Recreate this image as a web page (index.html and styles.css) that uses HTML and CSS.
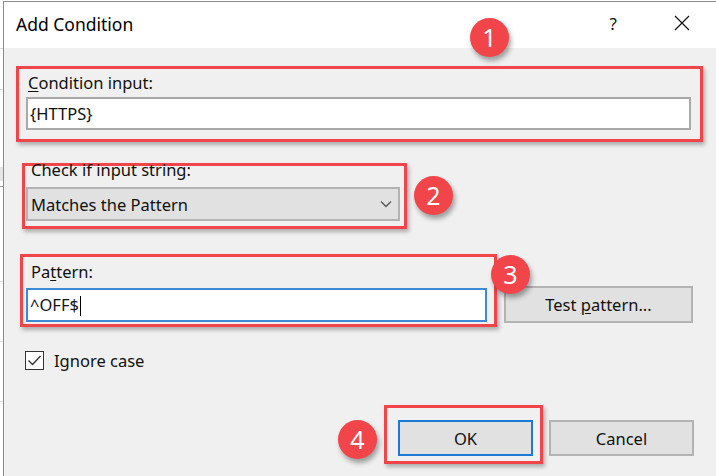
FILE: index.html
```html
<!DOCTYPE html>
<html>
<head>
<meta charset="utf-8">
<link rel="stylesheet" href="styles.css">
</head>
<body>
<div class="screen">
  <div class="sliver"></div>
  <div class="window">
    <div class="titlebar">
      <span class="title">Add Condition</span>
      <span class="help">?</span>
      <svg class="close" width="16" height="16" viewBox="0 0 16 16"><path d="M1 1 L15 15 M15 1 L1 15" stroke="#111" stroke-width="1.2" fill="none"/></svg>
    </div>
    <div class="content">
      <div class="mark box1">
        <div class="label"><u>C</u>ondition input:</div>
        <div class="field">{HTTPS}</div>
      </div>
      <div class="mark box2">
        <div class="label tight">Check if input string:</div>
        <div class="select"><span>Matches the Pattern</span>
          <svg width="12" height="8" viewBox="0 0 12 8"><path d="M1 1.5 L6 6.5 L11 1.5" stroke="#555" stroke-width="1.3" fill="none"/></svg>
        </div>
      </div>
      <div class="row3">
        <div class="mark box3">
          <div class="label">Pa<u>t</u>tern:</div>
          <div class="field focus">^OFF$<span class="caret"></span></div>
        </div>
        <div class="btn testbtn"><span>Test <u>p</u>attern...</span></div>
      </div>
      <div class="checkrow">
        <span class="checkbox"><svg width="17" height="17" viewBox="0 0 17 17"><path d="M2.5 8.5 L6.5 12.5 L14.5 4" stroke="#333" stroke-width="1.4" fill="none"/></svg></span>
        <span class="checklabel">Ignore case</span>
      </div>
      <div class="buttons">
        <div class="mark box4">
          <div class="btn ok"><span>OK</span></div>
        </div>
        <div class="btn cancel"><span>Cancel</span></div>
      </div>
    </div>
  </div>
</div>
<div class="badge b1">1</div>
<div class="badge b2">2</div>
<div class="badge b3">3</div>
<div class="badge b4">4</div>
</body>
</html>
```
FILE: styles.css
```css
html, body {
  margin: 0;
  padding: 0;
  background: #ffffff;
  width: 716px;
  height: 476px;
  overflow: hidden;
  font-family: "Noto Sans", "Open Sans", sans-serif;
  font-size: 16.5px;
  color: #111;
}
.screen {
  display: flex;
  height: 476px;
  padding-top: 1px;
  box-sizing: border-box;
}
.sliver {
  width: 3px;
  flex: none;
  background:
    linear-gradient(to bottom,
      #fff 0, #fff 47px, #d8d8d8 47px, #d8d8d8 48px,
      #fff 48px, #fff 88px, #d8d8d8 88px, #d8d8d8 89px,
      #fff 89px, #fff 166px, #e6e6e6 166px, #e6e6e6 180px,
      #fff 180px, #fff 185px, #999 185px, #999 186px,
      #fff 186px, #fff 280px, #e0e0e0 280px, #e0e0e0 281px,
      #fff 281px, #fff 340px, #e0e0e0 340px, #e0e0e0 341px,
      #fff 341px, #fff 400px, #e0e0e0 400px, #e0e0e0 401px, #fff 401px);
}
.window {
  flex: 1;
  display: flex;
  flex-direction: column;
  border-top: 1px solid #8a8a8a;
  border-left: 1px solid #8a8a8a;
  background: #f0f0f0;
}
.titlebar {
  height: 46px;
  flex: none;
  background: #ffffff;
  display: flex;
  align-items: center;
  padding-left: 12px;
}
.title {
  font-size: 17.5px;
  color: #000;
  flex: 1;
  margin-top: -2px;
}
.help {
  font-size: 17px;
  color: #111;
  margin-right: 57px;
  margin-top: -3px;
}
.close {
  margin-right: 26px;
  margin-top: -4px;
}
.content {
  flex: 1;
  padding-top: 18px;
  display: flex;
  flex-direction: column;
}
.mark {
  border: 3px solid #f2454a;
  box-shadow: 2px 3px 4px rgba(0, 0, 0, 0.28);
  box-sizing: border-box;
}
.label {
  line-height: 22px;
  height: 22px;
  white-space: nowrap;
}
.label u, .btn u {
  text-underline-offset: 2px;
}
.box1 {
  margin-left: 12px;
  margin-right: 13px;
  padding: 3px 9px 9px 7px;
}
.box1 .label {
  margin-left: 2px;
}
.box1 .field {
  margin-top: 3px;
}
.field {
  height: 33px;
  box-sizing: border-box;
  border: 2px solid #a9a9a9;
  background: #fff;
  line-height: 29px;
  padding-left: 2px;
  white-space: nowrap;
}
.field.focus {
  border-color: #3a8ad6;
  height: 34px;
  line-height: 30px;
}
.caret {
  display: inline-block;
  width: 1px;
  height: 20px;
  background: #000;
  vertical-align: -5px;
  margin-left: 1px;
}
.box2 {
  margin-top: 21px;
  margin-left: 18px;
  width: 385px;
  padding: 0 4px 5px 1px;
}
.label.tight {
  margin-top: -6px;
  margin-left: 5px;
  height: 20px;
  line-height: 20px;
}
.select {
  margin-top: 7px;
  height: 34px;
  box-sizing: border-box;
  border: 2px solid #b3b3b3;
  background: #e1e1e1;
  display: flex;
  align-items: center;
  justify-content: space-between;
  padding: 0 6px 0 3px;
}
.row3 {
  margin-top: 25px;
  margin-left: 16px;
  display: flex;
  align-items: flex-end;
}
.box3 {
  width: 477px;
  padding: 5px 7px 2px 3px;
}
.box3 .label {
  height: 20px;
  line-height: 20px;
  margin-left: 5px;
}
.box3 .field {
  margin-top: 6px;
}
.btn {
  box-sizing: border-box;
  border: 2px solid #b3b3b3;
  background: #e1e1e1;
  display: flex;
  align-items: center;
  justify-content: center;
  white-space: nowrap;
}
.testbtn {
  margin-left: 7px;
  margin-bottom: 4px;
  width: 189px;
  height: 37px;
}
.checkrow {
  margin-top: 24px;
  margin-left: 21px;
  display: flex;
  align-items: center;
  height: 19px;
}
.checkbox {
  width: 19px;
  height: 19px;
  box-sizing: border-box;
  border: 1px solid #333;
  background: #fff;
  display: flex;
  align-items: center;
  justify-content: center;
}
.checklabel {
  margin-left: 10px;
}
.buttons {
  margin-top: 35px;
  display: flex;
  justify-content: flex-end;
  align-items: flex-start;
  padding-right: 22px;
}
.box4 {
  width: 159px;
  padding: 12px 7px 5px 11px;
}
.ok {
  height: 36px;
  border-color: #1a7ad6;
}
.cancel {
  margin-left: 6px;
  margin-top: 15px;
  width: 145px;
  height: 36px;
}
.badge {
  position: absolute;
  width: 39px;
  height: 39px;
  border-radius: 50%;
  background: #f2454a;
  color: #fff;
  font-size: 25px;
  line-height: 39px;
  text-align: center;
  box-shadow: 2px 4px 5px rgba(0, 0, 0, 0.35);
}
.b1 { left: 470px; top: 18px; }
.b2 { left: 414px; top: 176px; }
.b3 { left: 491px; top: 255px; }
.b4 { left: 338px; top: 420px; }
```
